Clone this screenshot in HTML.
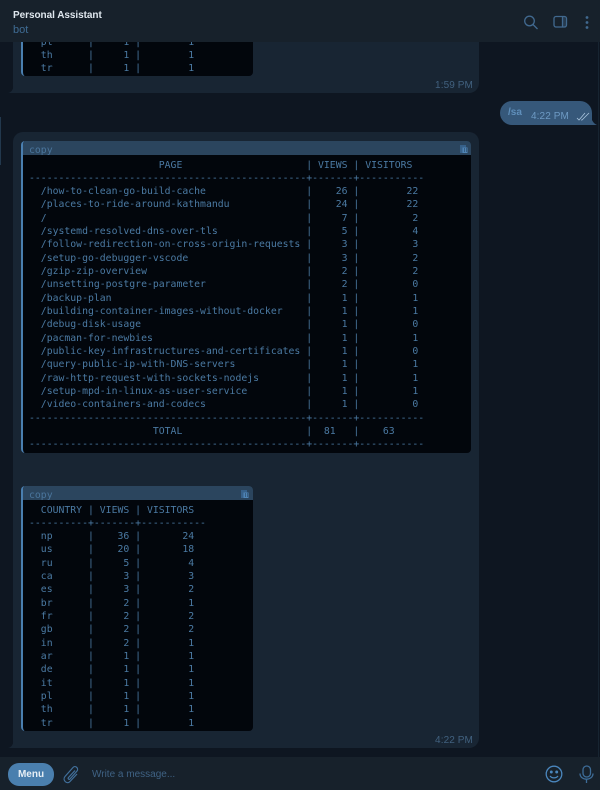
<!DOCTYPE html>
<html><head><meta charset="utf-8">
<style>
*{margin:0;padding:0;box-sizing:border-box}
html,body{width:600px;height:790px;overflow:hidden;background:#0e1621}
body{position:relative;font-family:"Liberation Sans",sans-serif}
.abs{position:absolute}
.top{left:0;top:0;width:600px;height:42px;background:#17212b}
.bubble{position:absolute;background:#182533;left:13px;width:466px}
.block{position:absolute;background:#02060c;border-left:2px solid #4a7fb0;border-radius:4px;overflow:hidden}
.hd{position:absolute;left:0;top:0;right:0;height:14px;background:#2b455e;color:#4a759c;font:9.8px/19px "DejaVu Sans Mono",monospace;padding-left:6px}
pre{position:absolute;left:6px;font:9.8px/13.33px "DejaVu Sans Mono",monospace;color:#4b7aa3;white-space:pre}
.time{position:absolute;font-size:10px;color:#41617f;letter-spacing:.1px}
svg{position:absolute;fill:none}
</style></head><body>

<div class="bubble" style="top:0;height:93px;border-radius:0 0 10px 0"></div>
<svg style="left:8px;top:86px" width="6" height="7"><path d="M5.500 0V7H0C3 6.500 5 4 5.500 0Z" fill="#182533"/></svg>
<div class="block" style="left:21px;top:0;width:232px;height:76px">
<pre style="top:35.500px">  pl      |     1 |        1
  th      |     1 |        1
  tr      |     1 |        1</pre>
</div>
<div class="time" style="right:127px;top:80px">1:59 PM</div>

<div class="abs" style="left:0;top:117px;width:1px;height:48px;background:#22384d"></div>
<div class="abs" style="left:598px;top:42px;width:1px;height:715px;background:#172431"></div>

<div class="abs" style="left:500px;top:101px;width:92px;height:24px;background:#36587a;border-radius:12px 12px 2px 12px"></div>
<svg style="left:588px;top:116px" width="10" height="9"><path d="M0 0L3 0C3.500 4 5 7 9 9H0Z" fill="#36587a"/></svg>
<div class="abs" style="left:508px;top:107px;font-size:10px;font-weight:bold;color:#5f8fbb">/sa</div>
<div class="abs" style="left:531px;top:111px;font-size:10px;color:#6d9ac4;letter-spacing:.1px">4:22 PM</div>
<svg style="left:576px;top:112px" width="14" height="9" stroke="#a9c4dd" stroke-width=".8"><path d="M1 6L3 8L9 1M5 8L6 8L13 1"/></svg>

<div class="bubble" style="top:132px;height:616px;border-radius:10px 10px 10px 0"></div>
<svg style="left:8px;top:741px" width="6" height="7"><path d="M5.500 0V7H0C3 6.500 5 4 5.500 0Z" fill="#182533"/></svg>

<div class="block" style="left:21px;top:141px;width:450px;height:312px">
<div class="hd">copy</div>
<svg style="left:436px;top:3px" width="10" height="10"><path d="M1 1H7V9H1Z" fill="#37618a"/><rect x="3.500" y="3.500" width="5" height="5.500" fill="#4f84b5"/><path d="M5 5h1M7 5h1M5 7h1M7 7h1" stroke="#1f3850"/></svg>
<pre style="top:17.500px">                      PAGE                     | VIEWS | VISITORS
-----------------------------------------------+-------+-----------
  /how-to-clean-go-build-cache                 |    26 |        22
  /places-to-ride-around-kathmandu             |    24 |        22
  /                                            |     7 |         2
  /systemd-resolved-dns-over-tls               |     5 |         4
  /follow-redirection-on-cross-origin-requests |     3 |         3
  /setup-go-debugger-vscode                    |     3 |         2
  /gzip-zip-overview                           |     2 |         2
  /unsetting-postgre-parameter                 |     2 |         0
  /backup-plan                                 |     1 |         1
  /building-container-images-without-docker    |     1 |         1
  /debug-disk-usage                            |     1 |         0
  /pacman-for-newbies                          |     1 |         1
  /public-key-infrastructures-and-certificates |     1 |         0
  /query-public-ip-with-DNS-servers            |     1 |         1
  /raw-http-request-with-sockets-nodejs        |     1 |         1
  /setup-mpd-in-linux-as-user-service          |     1 |         1
  /video-containers-and-codecs                 |     1 |         0
-----------------------------------------------+-------+-----------
                     TOTAL                     |  81   |    63
-----------------------------------------------+-------+-----------</pre>
</div>

<div class="block" style="left:21px;top:486px;width:232px;height:245px">
<div class="hd">copy</div>
<svg style="left:217px;top:3px" width="10" height="10"><path d="M1 1H7V9H1Z" fill="#37618a"/><rect x="3.500" y="3.500" width="5" height="5.500" fill="#4f84b5"/><path d="M5 5h1M7 5h1M5 7h1M7 7h1" stroke="#1f3850"/></svg>
<pre style="top:17.500px">  COUNTRY | VIEWS | VISITORS
----------+-------+-----------
  np      |    36 |       24
  us      |    20 |       18
  ru      |     5 |        4
  ca      |     3 |        3
  es      |     3 |        2
  br      |     2 |        1
  fr      |     2 |        2
  gb      |     2 |        2
  in      |     2 |        1
  ar      |     1 |        1
  de      |     1 |        1
  it      |     1 |        1
  pl      |     1 |        1
  th      |     1 |        1
  tr      |     1 |        1</pre>
</div>
<div class="time" style="right:127px;top:735px">4:22 PM</div>

<div class="abs top"></div>
<div class="abs" style="left:13px;top:10px;font-size:10px;font-weight:bold;color:#dfe7ee;letter-spacing:-.05px">Personal Assistant</div>
<div class="abs" style="left:13px;top:24px;font-size:11px;color:#3f6c94">bot</div>
<svg style="left:523px;top:14px" width="16" height="16" stroke="#41698f" stroke-width="1.300"><circle cx="6.500" cy="7" r="4.800"/><path d="M10 10.500L14.500 15"/></svg>
<svg style="left:553px;top:15px" width="15" height="14" stroke="#41698f" stroke-width="1.300"><rect x="1" y="1.500" width="12.500" height="10.500" rx="2"/><path d="M9.500 1.500V12"/><path d="M9.500 2H12.500L13 11.500H9.500Z" fill="#41698f" fill-opacity=".35" stroke="none"/></svg>
<svg style="left:584px;top:15px" width="6" height="15"><circle cx="3" cy="2.500" r="1.400" fill="#41698f"/><circle cx="3" cy="7.500" r="1.400" fill="#41698f"/><circle cx="3" cy="12.500" r="1.400" fill="#41698f"/></svg>

<div class="abs" style="left:0;top:757px;width:600px;height:33px;background:#17212b"></div>
<div class="abs" style="left:8px;top:763px;width:46px;height:23px;border-radius:11px;background:#4a7fae;color:#e6eef5;font-size:10px;font-weight:bold;text-align:center;line-height:24px">Menu</div>
<svg style="left:62px;top:765px" width="18" height="19" stroke="#41709c" stroke-width="1.200"><path d="M13 5.500L6.500 12.500C5.500 13.700 7 15 8 14L15 6C17 3.500 13.500 0 11 2.500L3 11.500C0 15 5 20 8 16.500L15 9"/></svg>
<div class="abs" style="left:92px;top:769px;font-size:10px;color:#3f6284">Write a message...</div>
<svg style="left:545px;top:765px" width="18" height="18" stroke="#4a86bd" stroke-width="1.300"><circle cx="9" cy="9" r="7.800"/><circle cx="6.300" cy="7" r=".8" fill="#4a86bd"/><circle cx="11.700" cy="7" r=".8" fill="#4a86bd"/><path d="M5 11C7 13.500 11 13.500 13 11"/></svg>
<svg style="left:579px;top:765px" width="15" height="19" stroke="#3d6c98" stroke-width="1.300"><rect x="4" y="1" width="7.500" height="11" rx="3.700"/><path d="M1 8.500C1 16 14 16 14 8.500M7.500 14V18"/></svg>
</body></html>
